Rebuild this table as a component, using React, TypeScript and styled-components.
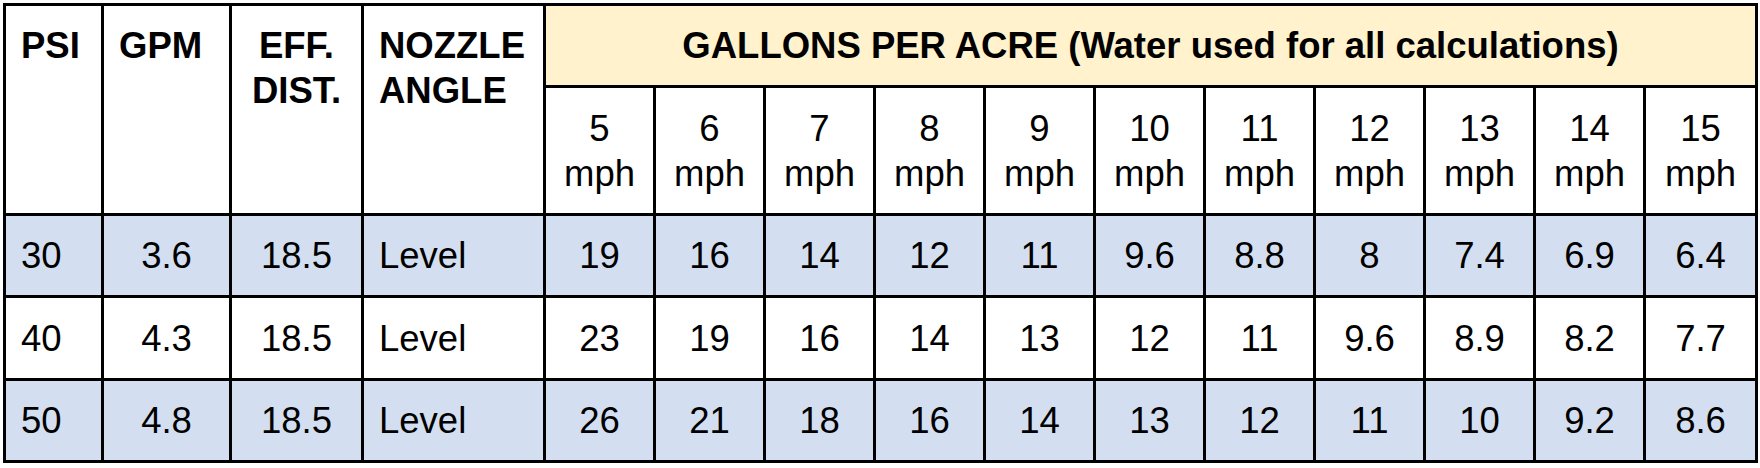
import React from "react";
import styled, { createGlobalStyle } from "styled-components";

const GlobalStyle = createGlobalStyle`
  html, body {
    margin: 0;
    padding: 0;
    background: #ffffff;
  }
  body {
    padding: 3px;
    font-family: "Liberation Sans", Arial, sans-serif;
    color: #000;
  }
`;

const Grid = styled.div`
  display: grid;
  grid-template-columns: 95px 125px 129px 179px repeat(10, 107px) 109px;
  grid-template-rows: 79px 125px 79px 80px 79px;
  gap: 3px;
  background: #000;
  border: 3px solid #000;
  width: max-content;
  font-size: 36.5px;
  line-height: 45px;
`;

const HeadCell = styled.div<{ $align: "left" | "center" }>`
  grid-row: span 2;
  background: #fff;
  font-weight: 700;
  padding: 17px 15px 0;
  text-align: ${(p) => p.$align};
  white-space: nowrap;
`;

const Banner = styled.div`
  grid-column: span 11;
  background: #fff2cc;
  font-weight: 700;
  display: flex;
  align-items: center;
  justify-content: center;
  white-space: nowrap;
`;

const SpeedCell = styled.div`
  background: #fff;
  display: flex;
  flex-direction: column;
  align-items: center;
  justify-content: center;
  text-align: center;
`;

const DataCell = styled.div<{ $shaded: boolean; $align: "left" | "center" }>`
  background: ${(p) => (p.$shaded ? "#d3dff0" : "#fff")};
  display: flex;
  align-items: center;
  justify-content: ${(p) => (p.$align === "left" ? "flex-start" : "center")};
  padding: 0 ${(p) => (p.$align === "left" ? "15px" : "0")};
  white-space: nowrap;
`;

const speeds = [5, 6, 7, 8, 9, 10, 11, 12, 13, 14, 15];

const rows: { psi: string; gpm: string; dist: string; angle: string; gal: string[] }[] = [
  { psi: "30", gpm: "3.6", dist: "18.5", angle: "Level", gal: ["19", "16", "14", "12", "11", "9.6", "8.8", "8", "7.4", "6.9", "6.4"] },
  { psi: "40", gpm: "4.3", dist: "18.5", angle: "Level", gal: ["23", "19", "16", "14", "13", "12", "11", "9.6", "8.9", "8.2", "7.7"] },
  { psi: "50", gpm: "4.8", dist: "18.5", angle: "Level", gal: ["26", "21", "18", "16", "14", "13", "12", "11", "10", "9.2", "8.6"] },
];

export default function App() {
  return (
    <>
      <GlobalStyle />
      <Grid>
        <HeadCell $align="left">PSI</HeadCell>
        <HeadCell $align="left">GPM</HeadCell>
        <HeadCell $align="center">
          EFF.
          <br />
          DIST.
        </HeadCell>
        <HeadCell $align="left">
          NOZZLE
          <br />
          ANGLE
        </HeadCell>
        <Banner>GALLONS PER ACRE (Water used for all calculations)</Banner>
        {speeds.map((s) => (
          <SpeedCell key={s}>
            <span>{s}</span>
            <span>mph</span>
          </SpeedCell>
        ))}
        {rows.map((r, i) => {
          const shaded = i % 2 === 0;
          return (
            <React.Fragment key={r.psi}>
              <DataCell $shaded={shaded} $align="left">{r.psi}</DataCell>
              <DataCell $shaded={shaded} $align="center">{r.gpm}</DataCell>
              <DataCell $shaded={shaded} $align="center">{r.dist}</DataCell>
              <DataCell $shaded={shaded} $align="left">{r.angle}</DataCell>
              {r.gal.map((g, j) => (
                <DataCell key={j} $shaded={shaded} $align="center">{g}</DataCell>
              ))}
            </React.Fragment>
          );
        })}
      </Grid>
    </>
  );
}
